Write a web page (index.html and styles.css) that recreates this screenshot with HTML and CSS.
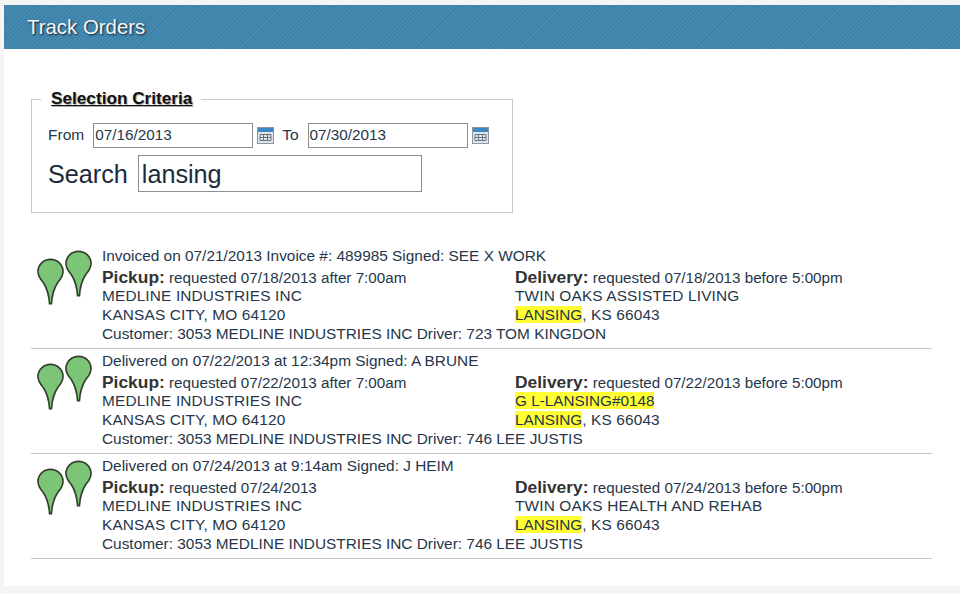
FILE: index.html
```html
<!DOCTYPE html>
<html lang="en">
<head>
<meta charset="utf-8">
<title>Track Orders</title>
<link rel="stylesheet" href="styles.css">
</head>
<body>
<svg class="defs" width="0" height="0" aria-hidden="true">
  <defs>
    <symbol id="pin" viewBox="0 0 28 48">
      <path d="M13 47C12.500 38 11 32 6.500 25C3 21 1 18 1 13.500C1 6.500 7 1 14 1C21 1 27 6.500 27 13.500C27 18 25 21 21.500 25C17 32 15.500 38 15 47Z" fill="#7cc476" stroke="#34402f" stroke-width="1.700"/>
    </symbol>
    <symbol id="cal" viewBox="0 0 17 17">
      <rect x="0.500" y="0.500" width="16" height="16" fill="#dfe4ea" stroke="#8a97a5"/>
      <rect x="1" y="1" width="15" height="4" fill="#3f86c4"/>
      <path d="M3 7.500H14M3 10.500H14M3 13.500H14M3 7.500V13.500M6.500 7.500V13.500M10.500 7.500V13.500M14 7.500V13.500" stroke="#6a7480" stroke-width="1" fill="none"/>
    </symbol>
  </defs>
</svg>
<div class="page">
  <header class="banner"><h1 class="banner-title">Track Orders</h1></header>
  <main class="panel">
    <fieldset class="criteria">
      <legend class="criteria-title">Selection Criteria</legend>
      <div class="date-row">
        <label class="date-label">From</label>
        <input class="date-input" type="text" value="07/16/2013">
        <svg class="cal-icon"><use href="#cal"/></svg>
        <label class="date-label to-label">To</label>
        <input class="date-input" type="text" value="07/30/2013">
        <svg class="cal-icon"><use href="#cal"/></svg>
      </div>
      <div class="search-row">
        <label class="search-label">Search</label>
        <input class="search-input" type="text" value="lansing">
      </div>
    </fieldset>

    <section class="orders">
      <article class="order">
        <div class="pins">
          <svg class="pin pin-low"><use href="#pin"/></svg>
          <svg class="pin pin-high"><use href="#pin"/></svg>
        </div>
        <div class="details">
          <div class="line status">Invoiced on 07/21/2013 Invoice #: 489985 Signed: SEE X WORK</div>
          <div class="stops">
            <div class="stop">
              <div class="line stop-head"><b class="stop-name">Pickup:</b> requested 07/18/2013 after 7:00am</div>
              <div class="line address">MEDLINE INDUSTRIES INC</div>
              <div class="line address">KANSAS CITY, MO 64120</div>
            </div>
            <div class="stop">
              <div class="line stop-head"><b class="stop-name">Delivery:</b> requested 07/18/2013 before 5:00pm</div>
              <div class="line address">TWIN OAKS ASSISTED LIVING</div>
              <div class="line address"><mark class="hit">LANSING</mark>, KS 66043</div>
            </div>
          </div>
          <div class="line">Customer: 3053 MEDLINE INDUSTRIES INC Driver: 723 TOM KINGDON</div>
        </div>
      </article>

      <article class="order">
        <div class="pins">
          <svg class="pin pin-low"><use href="#pin"/></svg>
          <svg class="pin pin-high"><use href="#pin"/></svg>
        </div>
        <div class="details">
          <div class="line status">Delivered on 07/22/2013 at 12:34pm Signed: A BRUNE</div>
          <div class="stops">
            <div class="stop">
              <div class="line stop-head"><b class="stop-name">Pickup:</b> requested 07/22/2013 after 7:00am</div>
              <div class="line address">MEDLINE INDUSTRIES INC</div>
              <div class="line address">KANSAS CITY, MO 64120</div>
            </div>
            <div class="stop">
              <div class="line stop-head"><b class="stop-name">Delivery:</b> requested 07/22/2013 before 5:00pm</div>
              <div class="line address"><mark class="hit">G L-LANSING#0148</mark></div>
              <div class="line address"><mark class="hit">LANSING</mark>, KS 66043</div>
            </div>
          </div>
          <div class="line">Customer: 3053 MEDLINE INDUSTRIES INC Driver: 746 LEE JUSTIS</div>
        </div>
      </article>

      <article class="order">
        <div class="pins">
          <svg class="pin pin-low"><use href="#pin"/></svg>
          <svg class="pin pin-high"><use href="#pin"/></svg>
        </div>
        <div class="details">
          <div class="line status">Delivered on 07/24/2013 at 9:14am Signed: J HEIM</div>
          <div class="stops">
            <div class="stop">
              <div class="line stop-head"><b class="stop-name">Pickup:</b> requested 07/24/2013</div>
              <div class="line address">MEDLINE INDUSTRIES INC</div>
              <div class="line address">KANSAS CITY, MO 64120</div>
            </div>
            <div class="stop">
              <div class="line stop-head"><b class="stop-name">Delivery:</b> requested 07/24/2013 before 5:00pm</div>
              <div class="line address">TWIN OAKS HEALTH AND REHAB</div>
              <div class="line address"><mark class="hit">LANSING</mark>, KS 66043</div>
            </div>
          </div>
          <div class="line">Customer: 3053 MEDLINE INDUSTRIES INC Driver: 746 LEE JUSTIS</div>
        </div>
      </article>
    </section>
  </main>
</div>
</body>
</html>
```
FILE: styles.css
```css
html, body {
  margin: 0;
  padding: 0;
  background: #f5f5f5;
}
body {
  width: 960px;
  height: 594px;
  overflow: hidden;
  font-family: "Liberation Sans", Arial, sans-serif;
  color: #26364a;
}
.defs {
  position: absolute;
}
.page {
  padding: 5px 0 8px 4px;
}
.banner {
  height: 44px;
  box-sizing: border-box;
  padding-left: 23px;
  display: flex;
  align-items: center;
  background-color: #3d83aa;
  background-image: repeating-linear-gradient(135deg, #3c81a8 0, #3c81a8 1.500px, #478bb2 1.500px, #478bb2 3px);
}
.banner-title {
  margin: 0;
  font-size: 20.400px;
  font-weight: normal;
  color: #f4f7fa;
  text-shadow: 1px 1px 2px #14202c;
}
.panel {
  background: #fff;
  height: 537px;
  box-sizing: border-box;
  padding: 40px 28px 0 27px;
}
.criteria {
  width: 482px;
  height: 124px;
  box-sizing: border-box;
  margin: 0;
  padding: 13px 0 0 16px;
  border: 1px solid #c8c8c8;
}
.criteria-title {
  margin-left: -7px;
  padding: 0 9px 2px 10px;
  font-size: 17.200px;
  font-weight: bold;
  line-height: 18px;
  color: #111;
  text-decoration: underline;
  text-shadow: 1px 1px 1px #aaa;
}
.date-row {
  display: flex;
  align-items: center;
  height: 26px;
}
.date-label {
  font-size: 15.500px;
}
.to-label {
  margin-left: 8px;
}
.date-input {
  width: 160px;
  height: 25px;
  box-sizing: border-box;
  margin-left: 9px;
  padding: 0 1px;
  border: 1px solid #8d8d8d;
  font: 15.300px "Liberation Sans", Arial, sans-serif;
  color: #26364a;
}
.to-label + .date-input {
  margin-left: 9px;
}
.cal-icon {
  width: 17px;
  height: 17px;
  margin-left: 4px;
}
.search-row {
  display: flex;
  align-items: center;
  margin-top: 7px;
}
.search-label {
  padding-top: 2px;
  font-size: 25.200px;
  color: #1b2a3a;
}
.search-input {
  width: 284px;
  height: 37px;
  box-sizing: border-box;
  margin-left: 10px;
  padding: 2px 3px 0;
  border: 1px solid #8d8d8d;
  font: 25.200px "Liberation Sans", Arial, sans-serif;
  color: #1b2a3a;
}
.orders {
  margin-top: 26px;
  width: 901px;
}
.order {
  display: flex;
  height: 105px;
  box-sizing: border-box;
  padding-top: 2px;
  border-bottom: 1px solid #c4c4c4;
}
.order:first-child {
  height: 110px;
  padding-top: 7px;
}
.pins {
  display: flex;
  align-items: flex-start;
  width: 71px;
  flex: none;
  padding: 4px 0 0 6px;
  box-sizing: border-box;
}
.pin {
  width: 27px;
  height: 47px;
}
.pin-low {
  margin-top: 8px;
}
.pin-high {
  margin-left: 1px;
}
.details {
  flex: 1;
  font-size: 15.400px;
}
.line {
  height: 19px;
  line-height: 19px;
  white-space: nowrap;
}
.status {
  margin-bottom: 2px;
}
.stops {
  display: grid;
  grid-template-columns: 413px 1fr;
}
.stop-head {
  font-size: 15.200px;
  line-height: 21px;
}
.address {
  letter-spacing: 0.150px;
}
.stop-name {
  font-size: 17.400px;
  color: #333;
}
.hit {
  letter-spacing: 0;
  font-size: 15.300px;
  background: #ffff33;
  color: inherit;
}
```
